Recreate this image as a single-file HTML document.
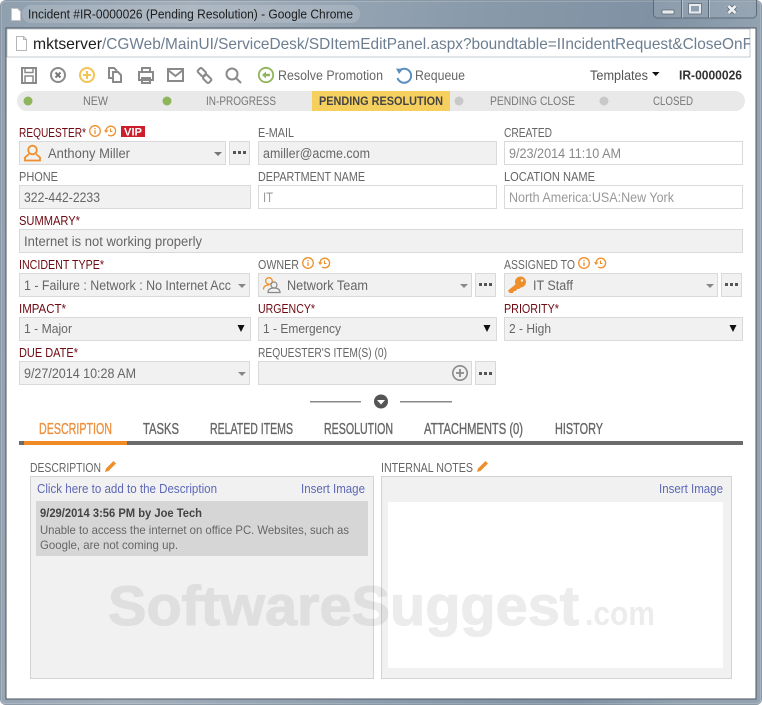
<!DOCTYPE html>
<html><head><meta charset="utf-8"><title>Incident</title>
<style>
html,body{margin:0;padding:0;background:#fff;width:762px;height:705px;overflow:hidden}
svg{display:block}
text{font-family:"Liberation Sans",sans-serif;font-size:12px;fill:#666}
.l{font-size:12.5px;fill:#666}
.r{font-size:12.5px;fill:#6f0a12}
.v{font-size:13.5px;fill:#666}
.s{font-size:12px;fill:#777}
.t{font-size:15.5px;fill:#666;stroke:#666;stroke-width:.35}
.a{font-size:12.5px;fill:#5d67b8}
.box{fill:#f1f1f1;stroke:#d9d9d9;stroke-width:1}
.wb{fill:#fff;stroke:#d9d9d9;stroke-width:1}
.ic{fill:none;stroke:#8a8a8a;stroke-width:2}
.or{fill:none;stroke:#ee8f2c;stroke-width:1.3}
</style></head><body>
<svg width="762" height="705" viewBox="0 0 762 705" xmlns="http://www.w3.org/2000/svg">
<defs>
<linearGradient id="f" x1="0" y1="0" x2="1" y2="0.1"><stop offset="0" stop-color="#8f9fae"/><stop offset=".25" stop-color="#a3afbb"/><stop offset=".6" stop-color="#8a9bab"/><stop offset=".85" stop-color="#7f91a3"/><stop offset="1" stop-color="#93a3b1"/></linearGradient>
<clipPath id="ac"><rect x="30" y="30" width="720" height="27"/></clipPath>
</defs>

<!-- window frame -->
<rect x="0" y="0" width="762" height="705" rx="6" fill="url(#f)"/>
<rect x="0.5" y="0.5" width="761" height="704" rx="6" fill="none" stroke="#5f6f7e" stroke-opacity=".6"/>
<rect x="1" y="1" width="760" height="703" rx="5" fill="none" stroke="#fff" stroke-opacity=".35"/>
<rect x="22" y="5" width="338" height="18" rx="9" fill="#c9d1d8" opacity=".3"/>
<rect x="6" y="28" width="750" height="671" fill="#fff" stroke="#4c5560"/>

<!-- title -->
<path d="M11.5 8.500h6l3 3v9h-9z" fill="#fff" stroke="#c4c4c4"/>
<text x="28" y="18.500" textLength="325" lengthAdjust="spacingAndGlyphs" style="font-size:12.500px;fill:#1c1c1c">Incident #IR-0000026 (Pending Resolution) - Google Chrome</text>

<!-- window buttons -->
<path d="M653.500 0v14a4 4 0 0 0 4 4h95a4 4 0 0 0 4-4V0" fill="#9fadba" fill-opacity=".4" stroke="#5d6b79"/>
<path d="M681.500 0v18M708.500 0v18" stroke="#5d6b79"/>
<path d="M682.500 0v18M709.500 0v18" stroke="#c5ced6" stroke-opacity=".7"/>
<rect x="662" y="10" width="12" height="4" fill="#e8ebee" stroke="#59636e" stroke-width=".7"/>
<rect x="690" y="5" width="10" height="7.500" fill="none" stroke="#e8ebee" stroke-width="2"/>
<rect x="688.500" y="3.500" width="13" height="10.500" fill="none" stroke="#59636e" stroke-width=".6"/>
<path d="M728.500 6l7 7m0-7l-7 7" stroke="#59636e" stroke-width="4.200"/>
<path d="M728.500 6l7 7m0-7l-7 7" stroke="#eef0f2" stroke-width="2.800"/>

<!-- address bar -->
<rect x="7" y="29" width="743" height="28" fill="#fff" stroke="#8a97a3" stroke-width=".5"/>
<path d="M16.500 36.500h7l3 3v11h-10z" fill="#fff" stroke="#b5b5b5"/>
<path d="M23.500 36.500v3h3" fill="none" stroke="#b5b5b5"/>
<g clip-path="url(#ac)">
<text x="33" y="49" textLength="69" lengthAdjust="spacingAndGlyphs" style="font-size:16px;fill:#1c1c1c">mktserver</text>
<text x="102" y="49" textLength="650" lengthAdjust="spacingAndGlyphs" style="font-size:16px;fill:#6d7e90">/CGWeb/MainUI/ServiceDesk/SDItemEditPanel.aspx?boundtable=IIncidentRequest&amp;CloseOnF</text>
</g>

<!-- toolbar icons -->
<path d="M22 68h14v15H22z" class="ic"/><path d="M25 68v4.500h8V68M25 83v-7h8v7" fill="none" stroke="#8a8a8a" stroke-width="1.500"/>
<circle cx="58" cy="75" r="7" class="ic"/><path d="M55.500 72.500l5 5m0-5l-5 5" stroke="#777" stroke-width="2"/>
<circle cx="87" cy="75" r="7" fill="none" stroke="#f4c452" stroke-width="2"/><path d="M87 71v8M83 75h8" stroke="#f4c452" stroke-width="2"/>
<path d="M112 78h-3V68h5l3 3" fill="none" stroke="#8a8a8a" stroke-width="2"/><path d="M113 72h5l3 3v7h-8z" class="ic"/>
<path d="M142 71v-3h8v3M139 80v-8h14v8zM142 78h8v5h-8z" fill="#fff" stroke="#8a8a8a" stroke-width="2"/>
<rect x="168" y="69" width="15" height="12" class="ic"/><path d="M168 70l7.500 6 7.500-6" class="ic"/>
<g fill="none" stroke="#8a8a8a" stroke-width="2"><rect x="198" y="69.500" width="8" height="5.500" rx="1.500" transform="rotate(45 202 72)"/><rect x="203" y="76" width="8" height="5.500" rx="1.500" transform="rotate(45 207 79)"/></g>
<circle cx="232" cy="74" r="5.500" class="ic"/><path d="M236 78l5 5" stroke="#8a8a8a" stroke-width="2"/>
<circle cx="266" cy="75" r="7.200" fill="none" stroke="#8fb55a" stroke-width="1.800"/><path d="M262 75l4-3.500v2.300h4v2.400h-4v2.300z" fill="#8fb55a"/>
<text x="278" y="80" textLength="105" lengthAdjust="spacingAndGlyphs" class="v">Resolve Promotion</text>
<path d="M399 71a7 7 0 1 1 -1.500 7" fill="none" stroke="#5a8fc0" stroke-width="2"/><path d="M396 68.500l7 .5-4 5z" fill="#5a8fc0"/>
<text x="415" y="80" textLength="50" lengthAdjust="spacingAndGlyphs" class="v">Requeue</text>
<text x="590" y="80" textLength="58" lengthAdjust="spacingAndGlyphs" class="v" style="fill:#555">Templates</text>
<path d="M652 72h7.500l-3.700 4z" fill="#111"/>
<text x="679" y="79.500" textLength="63" lengthAdjust="spacingAndGlyphs" style="font-size:12.500px;font-weight:bold;fill:#333">IR-0000026</text>

<!-- status -->
<rect x="17" y="91" width="728" height="20" rx="10" fill="#e9e9e9"/>
<rect x="312" y="91" width="138" height="20" fill="#f6d05f"/>
<circle cx="28" cy="101" r="4.500" fill="#8fb55a"/><circle cx="167" cy="101" r="4.500" fill="#8fb55a"/>
<circle cx="459" cy="101" r="4.500" fill="#c8c8c8"/><circle cx="604" cy="101" r="4.500" fill="#c8c8c8"/>
<text x="83" y="105" textLength="25" lengthAdjust="spacingAndGlyphs" class="s">NEW</text>
<text x="206" y="105" textLength="70" lengthAdjust="spacingAndGlyphs" class="s">IN-PROGRESS</text>
<text x="319" y="105" textLength="124" lengthAdjust="spacingAndGlyphs" style="font-size:12px;font-weight:bold;fill:#444">PENDING RESOLUTION</text>
<text x="490" y="105" textLength="85" lengthAdjust="spacingAndGlyphs" class="s">PENDING CLOSE</text>
<text x="653" y="105" textLength="40" lengthAdjust="spacingAndGlyphs" class="s">CLOSED</text>

<!-- row 1 labels -->
<text x="19" y="137" textLength="67" lengthAdjust="spacingAndGlyphs" class="r">REQUESTER*</text>
<circle cx="95" cy="131" r="5.300" class="or"/><path d="M95 128v1.300M95 130.300v3.700" stroke="#ee8f2c" stroke-width="1.300"/>
<path d="M106 131a4.800 4.800 0 1 1 2 3.900" class="or"/><path d="M104 130l4.500 .5-2.500 2.500z" fill="#ee8f2c"/><path d="M110.500 128.500v3h2" fill="none" stroke="#ee8f2c" stroke-width="1"/>
<rect x="121" y="126" width="24" height="11" fill="#cc1f2b"/>
<text x="124" y="135.500" textLength="18" lengthAdjust="spacingAndGlyphs" style="font-size:11px;font-weight:bold;fill:#fff">VIP</text>
<text x="258" y="137" textLength="36" lengthAdjust="spacingAndGlyphs" class="l">E-MAIL</text>
<text x="504" y="137" textLength="48" lengthAdjust="spacingAndGlyphs" class="l">CREATED</text>

<!-- row 1 fields -->
<rect x="19.500" y="141.500" width="206" height="23" class="box"/>
<circle cx="32.500" cy="150" r="4.300" fill="none" stroke="#ee8f2c" stroke-width="1.800"/><path d="M29 154l-4 3.500v3h15v-3l-4-3.500" fill="none" stroke="#ee8f2c" stroke-width="1.800"/>
<text x="48" y="158" textLength="82" lengthAdjust="spacingAndGlyphs" class="v">Anthony Miller</text>
<path d="M214 152h8l-4 4z" fill="#777"/>
<rect x="229.500" y="141.500" width="20" height="23" class="box"/>
<path d="M233 151h3v3h-3zM238 151h3v3h-3zM243 151h3v3h-3z" fill="#555"/>
<rect x="258.500" y="141.500" width="238" height="23" class="box"/>
<text x="263" y="158" textLength="107" lengthAdjust="spacingAndGlyphs" class="v">amiller@acme.com</text>
<rect x="504.500" y="141.500" width="238" height="23" class="wb"/>
<text x="509" y="158" textLength="112" lengthAdjust="spacingAndGlyphs" class="v" style="fill:#888">9/23/2014 11:10 AM</text>

<!-- row 2 -->
<text x="19" y="181" textLength="39" lengthAdjust="spacingAndGlyphs" class="l">PHONE</text>
<text x="258" y="181" textLength="107" lengthAdjust="spacingAndGlyphs" class="l">DEPARTMENT NAME</text>
<text x="504" y="181" textLength="91" lengthAdjust="spacingAndGlyphs" class="l">LOCATION NAME</text>
<rect x="19.500" y="185.500" width="231" height="23" class="box"/>
<text x="24" y="202" textLength="76" lengthAdjust="spacingAndGlyphs" class="v">322-442-2233</text>
<rect x="258.500" y="185.500" width="238" height="23" class="wb"/>
<text x="263" y="202" textLength="10" lengthAdjust="spacingAndGlyphs" class="v" style="fill:#999">IT</text>
<rect x="504.500" y="185.500" width="238" height="23" class="wb"/>
<text x="509" y="202" textLength="165" lengthAdjust="spacingAndGlyphs" class="v" style="fill:#999">North America:USA:New York</text>

<!-- summary -->
<text x="19" y="225" textLength="61" lengthAdjust="spacingAndGlyphs" class="r">SUMMARY*</text>
<rect x="19.500" y="229.500" width="723" height="23" class="box"/>
<text x="24" y="246" textLength="178" lengthAdjust="spacingAndGlyphs" class="v">Internet is not working properly</text>

<!-- row 4 -->
<text x="19" y="269" textLength="85" lengthAdjust="spacingAndGlyphs" class="r">INCIDENT TYPE*</text>
<text x="258" y="269" textLength="41" lengthAdjust="spacingAndGlyphs" class="l">OWNER</text>
<circle cx="308" cy="263" r="5.300" class="or"/><path d="M308 260v1.300M308 262.300v3.700" stroke="#ee8f2c" stroke-width="1.300"/>
<path d="M320 263a4.800 4.800 0 1 1 2 3.900" class="or"/><path d="M318 262l4.500 .5-2.500 2.500z" fill="#ee8f2c"/><path d="M324.500 260.500v3h2" fill="none" stroke="#ee8f2c" stroke-width="1"/>
<text x="504" y="269" textLength="71" lengthAdjust="spacingAndGlyphs" class="l">ASSIGNED TO</text>
<circle cx="584" cy="263" r="5.300" class="or"/><path d="M584 260v1.300M584 262.300v3.700" stroke="#ee8f2c" stroke-width="1.300"/>
<path d="M596 263a4.800 4.800 0 1 1 2 3.900" class="or"/><path d="M594 262l4.500 .5-2.500 2.500z" fill="#ee8f2c"/><path d="M600.500 260.500v3h2" fill="none" stroke="#ee8f2c" stroke-width="1"/>

<rect x="19.500" y="273.500" width="230" height="23" class="box"/>
<text x="24" y="290" textLength="207" lengthAdjust="spacingAndGlyphs" class="v">1 - Failure : Network : No Internet Acc</text>
<path d="M238 284h8l-4 4z" fill="#888"/>
<rect x="258.500" y="273.500" width="213" height="23" class="box"/>
<circle cx="269" cy="281" r="3.300" fill="none" stroke="#ee8f2c" stroke-width="1.300"/><path d="M263.500 289.500c0-3 2-4.500 5.500-4.500" fill="none" stroke="#ee8f2c" stroke-width="1.300"/>
<circle cx="274" cy="285" r="3" fill="none" stroke="#888" stroke-width="1.200"/><path d="M268 292.500c0-3.500 2.500-4.500 6-4.500s6 1 6 4.500z" fill="none" stroke="#888" stroke-width="1.200"/>
<text x="287" y="290" textLength="81" lengthAdjust="spacingAndGlyphs" class="v">Network Team</text>
<path d="M460 284h8l-4 4z" fill="#888"/>
<rect x="475.500" y="273.500" width="20" height="23" class="box"/>
<path d="M479 283h3v3h-3zM484 283h3v3h-3zM489 283h3v3h-3z" fill="#555"/>
<rect x="504.500" y="273.500" width="213" height="23" class="box"/>
<circle cx="520.500" cy="282" r="5.500" fill="#ee8f2c"/><path d="M516 284l-8 6.500 1.500 2.500h3.500l1-2h2l1-2h2l2.500-2z" fill="#ee8f2c"/><circle cx="522" cy="280.500" r="1.200" fill="#f1f1f1"/>
<text x="533" y="290" textLength="40" lengthAdjust="spacingAndGlyphs" class="v">IT Staff</text>
<path d="M706 284h8l-4 4z" fill="#888"/>
<rect x="721.500" y="273.500" width="20" height="23" class="box"/>
<path d="M725 283h3v3h-3zM730 283h3v3h-3zM735 283h3v3h-3z" fill="#555"/>

<!-- row 5 -->
<text x="19" y="313" textLength="47" lengthAdjust="spacingAndGlyphs" class="r">IMPACT*</text>
<text x="258" y="313" textLength="57" lengthAdjust="spacingAndGlyphs" class="r">URGENCY*</text>
<text x="504" y="313" textLength="55" lengthAdjust="spacingAndGlyphs" class="r">PRIORITY*</text>
<rect x="19.500" y="317.500" width="231" height="23" class="box"/>
<text x="24" y="333" textLength="48" lengthAdjust="spacingAndGlyphs" style="font-size:12.500px;fill:#666">1 - Major</text>
<path d="M237.500 325h7l-3.500 7z" fill="#111"/>
<rect x="258.500" y="317.500" width="238" height="23" class="box"/>
<text x="263" y="333" textLength="78" lengthAdjust="spacingAndGlyphs" style="font-size:12.500px;fill:#666">1 - Emergency</text>
<path d="M483.500 325h7l-3.500 7z" fill="#111"/>
<rect x="504.500" y="317.500" width="238" height="23" class="box"/>
<text x="509" y="333" textLength="42" lengthAdjust="spacingAndGlyphs" style="font-size:12.500px;fill:#666">2 - High</text>
<path d="M729.500 325h7l-3.500 7z" fill="#111"/>

<!-- row 6 -->
<text x="19" y="357" textLength="59" lengthAdjust="spacingAndGlyphs" class="r">DUE DATE*</text>
<text x="258" y="357" textLength="129" lengthAdjust="spacingAndGlyphs" class="l">REQUESTER'S ITEM(S) (0)</text>
<rect x="19.500" y="361.500" width="230" height="23" class="box"/>
<text x="24" y="378" textLength="112" lengthAdjust="spacingAndGlyphs" class="v">9/27/2014 10:28 AM</text>
<path d="M238 372h8l-4 4z" fill="#888"/>
<rect x="258.500" y="361.500" width="213" height="23" class="box"/>
<circle cx="460" cy="373" r="7.200" fill="none" stroke="#8a8a8a" stroke-width="1.600"/><path d="M460 369v8M456 373h8" stroke="#8a8a8a" stroke-width="1.800"/>
<rect x="475.500" y="361.500" width="20" height="23" class="box"/>
<path d="M479 372h3v3h-3zM484 372h3v3h-3zM489 372h3v3h-3z" fill="#555"/>

<!-- divider -->
<rect x="310" y="401" width="51" height="1.500" fill="#888"/>
<circle cx="381" cy="401.500" r="7" fill="#555"/><path d="M377 400h8l-4 4.500z" fill="#fff"/>
<rect x="400" y="401" width="52" height="1.500" fill="#888"/>

<!-- tabs -->
<text x="39" y="434" textLength="73" lengthAdjust="spacingAndGlyphs" class="t" style="fill:#ee8f3c;stroke:#ee8f3c">DESCRIPTION</text>
<text x="143" y="434" textLength="36" lengthAdjust="spacingAndGlyphs" class="t">TASKS</text>
<text x="210" y="434" textLength="83" lengthAdjust="spacingAndGlyphs" class="t">RELATED ITEMS</text>
<text x="324" y="434" textLength="69" lengthAdjust="spacingAndGlyphs" class="t">RESOLUTION</text>
<text x="424" y="434" textLength="99" lengthAdjust="spacingAndGlyphs" class="t">ATTACHMENTS (0)</text>
<text x="555" y="434" textLength="48" lengthAdjust="spacingAndGlyphs" class="t">HISTORY</text>
<rect x="19" y="441" width="724" height="4" fill="#6b6b6b"/>
<rect x="24" y="441" width="103" height="4" fill="#f08a24"/>

<!-- panels -->
<text x="30" y="472" textLength="71" lengthAdjust="spacingAndGlyphs" class="l">DESCRIPTION</text>
<path d="M105 472l1-3.500 7.500-7.500 2.500 2.500-7.500 7.500z" fill="#ee8f2c"/>
<text x="381" y="472" textLength="92" lengthAdjust="spacingAndGlyphs" class="l">INTERNAL NOTES</text>
<path d="M477 472l1-3.500 7.500-7.500 2.500 2.500-7.500 7.500z" fill="#ee8f2c"/>

<rect x="30.500" y="476.500" width="343" height="202" fill="#f1f1f1" stroke="#d3d3d3"/>
<rect x="381.500" y="476.500" width="350" height="202" fill="#f1f1f1" stroke="#d3d3d3"/>
<text x="37" y="493" textLength="180" lengthAdjust="spacingAndGlyphs" class="a">Click here to add to the Description</text>
<text x="301" y="493" textLength="64" lengthAdjust="spacingAndGlyphs" class="a">Insert Image</text>
<text x="659" y="493" textLength="64" lengthAdjust="spacingAndGlyphs" class="a">Insert Image</text>
<rect x="36" y="501" width="332" height="55" fill="#d6d6d6"/>
<text x="40" y="517" textLength="162" lengthAdjust="spacingAndGlyphs" style="font-size:12px;font-weight:bold;fill:#444">9/29/2014 3:56 PM by Joe Tech</text>
<text x="40" y="534" textLength="309" lengthAdjust="spacingAndGlyphs" style="font-size:12px;fill:#666">Unable to access the internet on office PC. Websites, such as</text>
<text x="40" y="549" textLength="138" lengthAdjust="spacingAndGlyphs" style="font-size:12px;fill:#666">Google, are not coming up.</text>
<rect x="388" y="502" width="335" height="166" fill="#fff"/>

<!-- watermark -->
<text x="108" y="625" textLength="471" lengthAdjust="spacingAndGlyphs" opacity=".07" style="font-size:56px;font-weight:bold;fill:#000;stroke:#000;stroke-width:1.200">SoftwareSuggest</text>
<text x="585" y="625" textLength="70" lengthAdjust="spacingAndGlyphs" opacity=".07" style="font-size:34px;font-weight:bold;fill:#000">.com</text>
</svg>
</body></html>
